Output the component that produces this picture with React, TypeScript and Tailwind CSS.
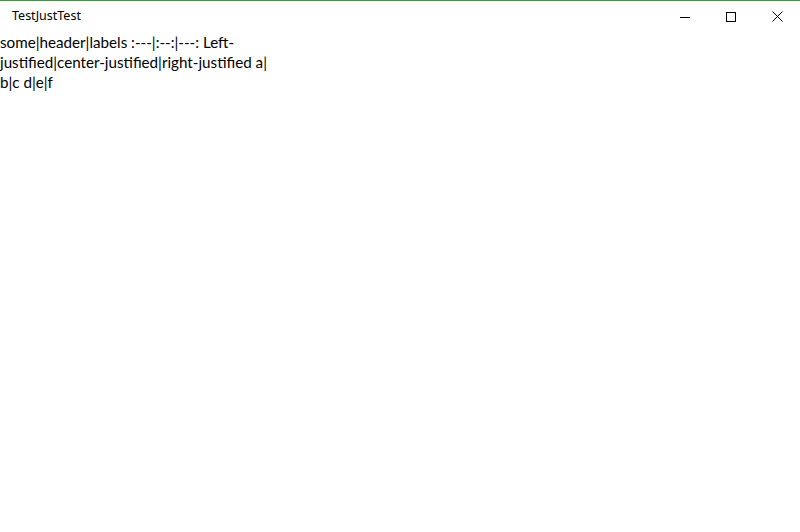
export default function App() {
  return (
    <div className="w-[800px] h-[532px] bg-white border-t border-[#31a031] flex flex-col" style={{ fontFamily: '"Noto Sans", "Open Sans", sans-serif' }}>
      {/* Title bar */}
      <div className="h-[31px] flex items-center">
        <div className="pl-3 text-[12.5px] text-black flex-1">TestJustTest</div>
        <div className="flex h-full">
          <button className="w-[46px] h-full flex items-center justify-center">
            <svg width="10" height="10" viewBox="0 0 10 10">
              <path d="M0 5.5H10" stroke="#000" strokeWidth="1" />
            </svg>
          </button>
          <button className="w-[46px] h-full flex items-center justify-center">
            <svg width="10" height="10" viewBox="0 0 10 10">
              <rect x="0.5" y="0.5" width="9" height="9" fill="none" stroke="#000" strokeWidth="1" />
            </svg>
          </button>
          <button className="w-[46px] h-full flex items-center justify-center">
            <svg width="11" height="11" viewBox="0 0 11 11">
              <path d="M0.5 0.5L10.5 10.5M10.5 0.5L0.5 10.5" stroke="#000" strokeWidth="1" />
            </svg>
          </button>
        </div>
      </div>
      {/* Content */}
      <div className="w-[284px] text-[15.2px] leading-[20px] text-black font-['Lato',sans-serif]">
        some|header|labels :---|:--:|---: Left-justified|center-justified|right-justified a| b|c d|e|f
      </div>
    </div>
  );
}
